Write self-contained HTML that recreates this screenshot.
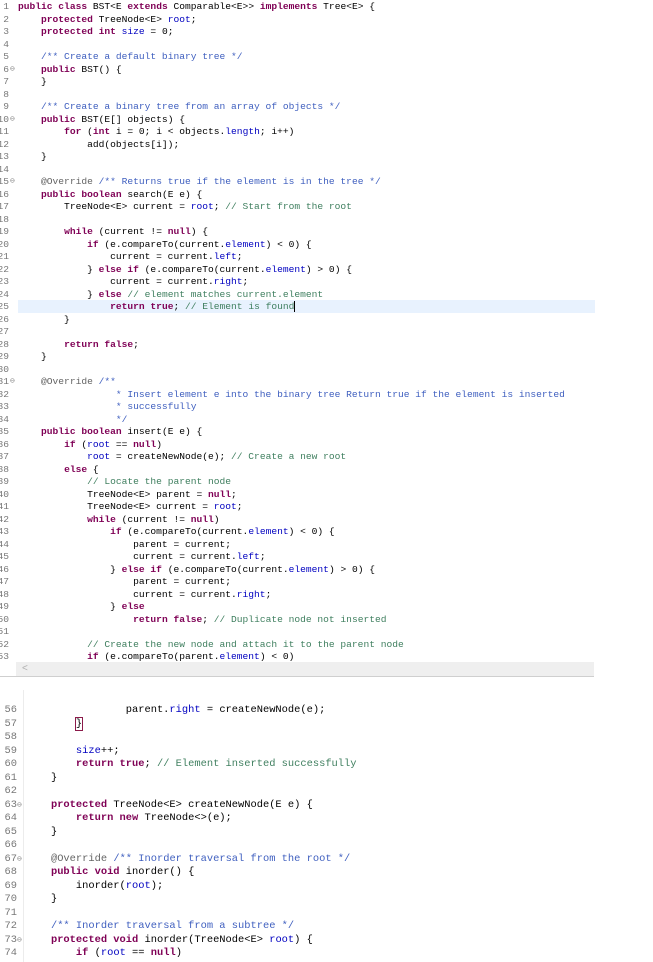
<!DOCTYPE html>
<html><head><meta charset="utf-8"><style>
html,body{margin:0;padding:0;background:#fff;width:653px;height:962px;overflow:hidden;position:relative}
.p{position:absolute;left:0;white-space:pre;font-family:"Liberation Mono",monospace;color:#000}
.t{font-size:9.6px;line-height:12.5px;height:12.5px}
.b{font-size:10.4px;line-height:13.5px;height:13.5px}
.n{position:absolute;color:#787878;text-align:right}
.t .n{right:auto;left:-20px;width:29px}
.b .n{left:-10px;width:27px}
.fo{position:absolute;color:#8a8a8a;font-size:8px}
.c1{position:absolute}
.t .c1{left:18px}
.b .c1{left:26px}
.k{color:#7f0055;font-weight:bold}
.f{color:#0000c0}
.c{color:#3f7f5f}
.j{color:#3f5fbf;font-style:normal}
.a{color:#646464}
</style></head><body>
<div style="position:absolute;left:18px;top:300px;width:577px;height:12.5px;background:#e8f2fe"></div>
<div style="position:absolute;left:16px;top:662px;width:578px;height:14px;background:#efefef"></div>
<div style="position:absolute;left:22px;top:663px;color:#b0b0b0;font:10px 'Liberation Sans',sans-serif">&lt;</div>
<div style="position:absolute;left:0;top:676px;width:594px;height:1px;background:#cfcfcf"></div>
<div style="position:absolute;left:23px;top:690px;width:1px;height:272px;background:#ececec"></div>
<div id="top"></div>
<div id="bot"></div>
<script>
var T=[
'<span class="k">public class</span> BST&lt;E <span class="k">extends</span> Comparable&lt;E&gt;&gt; <span class="k">implements</span> Tree&lt;E&gt; {',
'    <span class="k">protected</span> TreeNode&lt;E&gt; <span class="f">root</span>;',
'    <span class="k">protected int</span> <span class="f">size</span> = 0;',
'',
'    <span class="j">/** Create a default binary tree */</span>',
'    <span class="k">public</span> BST() {',
'    }',
'',
'    <span class="j">/** Create a binary tree from an array of objects */</span>',
'    <span class="k">public</span> BST(E[] objects) {',
'        <span class="k">for</span> (<span class="k">int</span> i = 0; i &lt; objects.<span class="f">length</span>; i++)',
'            add(objects[i]);',
'    }',
'',
'    <span class="a">@Override</span> <span class="j">/** Returns true if the element is in the tree */</span>',
'    <span class="k">public boolean</span> search(E e) {',
'        TreeNode&lt;E&gt; current = <span class="f">root</span>; <span class="c">// Start from the root</span>',
'',
'        <span class="k">while</span> (current != <span class="k">null</span>) {',
'            <span class="k">if</span> (e.compareTo(current.<span class="f">element</span>) &lt; 0) {',
'                current = current.<span class="f">left</span>;',
'            } <span class="k">else if</span> (e.compareTo(current.<span class="f">element</span>) &gt; 0) {',
'                current = current.<span class="f">right</span>;',
'            } <span class="k">else</span> <span class="c">// element matches current.element</span>',
'                <span class="k">return true</span>; <span class="c">// Element is found</span><span style="border-left:1px solid #000"></span>',
'        }',
'',
'        <span class="k">return false</span>;',
'    }',
'',
'    <span class="a">@Override</span> <span class="j">/**</span>',
'<span class="j">                 * Insert element e into the binary tree Return true if the element is inserted</span>',
'<span class="j">                 * successfully</span>',
'<span class="j">                 */</span>',
'    <span class="k">public boolean</span> insert(E e) {',
'        <span class="k">if</span> (<span class="f">root</span> == <span class="k">null</span>)',
'            <span class="f">root</span> = createNewNode(e); <span class="c">// Create a new root</span>',
'        <span class="k">else</span> {',
'            <span class="c">// Locate the parent node</span>',
'            TreeNode&lt;E&gt; parent = <span class="k">null</span>;',
'            TreeNode&lt;E&gt; current = <span class="f">root</span>;',
'            <span class="k">while</span> (current != <span class="k">null</span>)',
'                <span class="k">if</span> (e.compareTo(current.<span class="f">element</span>) &lt; 0) {',
'                    parent = current;',
'                    current = current.<span class="f">left</span>;',
'                } <span class="k">else if</span> (e.compareTo(current.<span class="f">element</span>) &gt; 0) {',
'                    parent = current;',
'                    current = current.<span class="f">right</span>;',
'                } <span class="k">else</span>',
'                    <span class="k">return false</span>; <span class="c">// Duplicate node not inserted</span>',
'',
'            <span class="c">// Create the new node and attach it to the parent node</span>',
'            <span class="k">if</span> (e.compareTo(parent.<span class="f">element</span>) &lt; 0)'
];
var folds={6:1,10:1,15:1,31:1};
var h='';
for(var i=0;i<T.length;i++){
 var n=i+1;
 h+='<div class="p t" style="top:'+(1+i*12.5)+'px;width:600px"><span class="n">'+n+'</span>'+(folds[n]?'<span class="fo" style="left:10px">⊖</span>':'')+'<span class="c1">'+T[i]+'</span></div>';
}
document.getElementById('top').innerHTML=h;
var B=[
'                parent.<span class="f">right</span> = createNewNode(e);',
'        <span style="outline:1px solid #8b1a4a">}</span>',
'',
'        <span class="f">size</span>++;',
'        <span class="k">return true</span>; <span class="c">// Element inserted successfully</span>',
'    }',
'',
'    <span class="k">protected</span> TreeNode&lt;E&gt; createNewNode(E e) {',
'        <span class="k">return new</span> TreeNode&lt;&gt;(e);',
'    }',
'',
'    <span class="a">@Override</span> <span class="j">/** Inorder traversal from the root */</span>',
'    <span class="k">public void</span> inorder() {',
'        inorder(<span class="f">root</span>);',
'    }',
'',
'    <span class="j">/** Inorder traversal from a subtree */</span>',
'    <span class="k">protected void</span> inorder(TreeNode&lt;E&gt; <span class="f">root</span>) {',
'        <span class="k">if</span> (<span class="f">root</span> == <span class="k">null</span>)'
];
var f2={63:1,67:1,73:1};
h='';
for(var i=0;i<B.length;i++){
 var n=56+i;
 h+='<div class="p b" style="top:'+(704+i*13.5)+'px;width:600px"><span class="n">'+n+'</span>'+(f2[n]?'<span class="fo" style="left:17px">⊖</span>':'')+'<span class="c1">'+B[i]+'</span></div>';
}
document.getElementById('bot').innerHTML=h;
</script>
</body></html>
